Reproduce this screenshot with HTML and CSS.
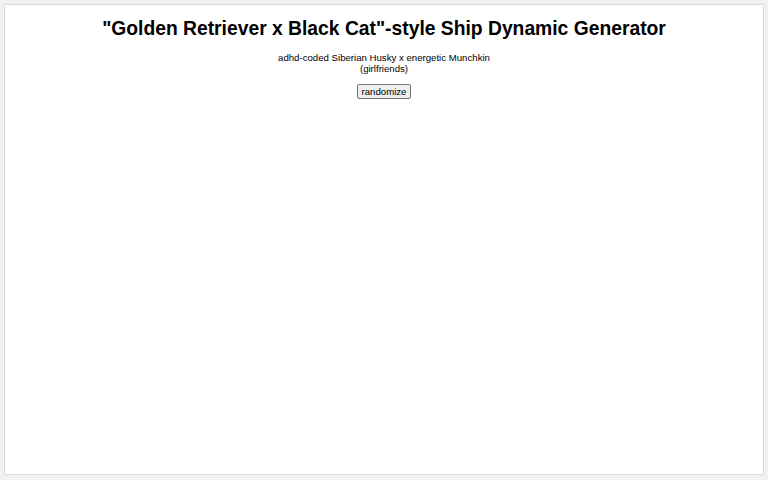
FILE: index.html
```html
<!DOCTYPE html>
<html>
<head>
<meta charset="utf-8">
<link rel="stylesheet" href="styles.css">
</head>
<body>
<div class="card">
  <h1 class="title">"Golden Retriever x Black Cat"-style Ship Dynamic Generator</h1>
  <p class="result">adhd-coded Siberian Husky x energetic Munchkin<br>(girlfriends)</p>
  <button class="btn">randomize</button>
</div>
</body>
</html>
```
FILE: styles.css
```css
html, body { margin: 0; padding: 0; }
body {
  background: #f2f2f2;
  padding: 4px;
  font-family: "Liberation Sans", Arial, sans-serif;
  box-sizing: border-box;
  height: 480px;
}
.card {
  background: #fff;
  border: 1px solid #dcdcdc;
  height: 471px;
  box-sizing: border-box;
  display: flex;
  flex-direction: column;
  align-items: center;
  padding-top: 12px;
}
.title {
  font-size: 19.3px;
  font-weight: bold;
  margin: 0 0 12px 0;
  color: #000;
  line-height: 23px;
}
.result {
  font-size: 9.65px;
  line-height: 11px;
  text-align: center;
  margin: 0 0 10px 0;
  color: #000;
}
.btn {
  font-family: "Liberation Sans", Arial, sans-serif;
  font-size: 9.65px;
  padding: 1px 4px;
  background: #efefef;
  border: 1px solid #767676;
  border-radius: 2px;
  color: #000;
}
```
